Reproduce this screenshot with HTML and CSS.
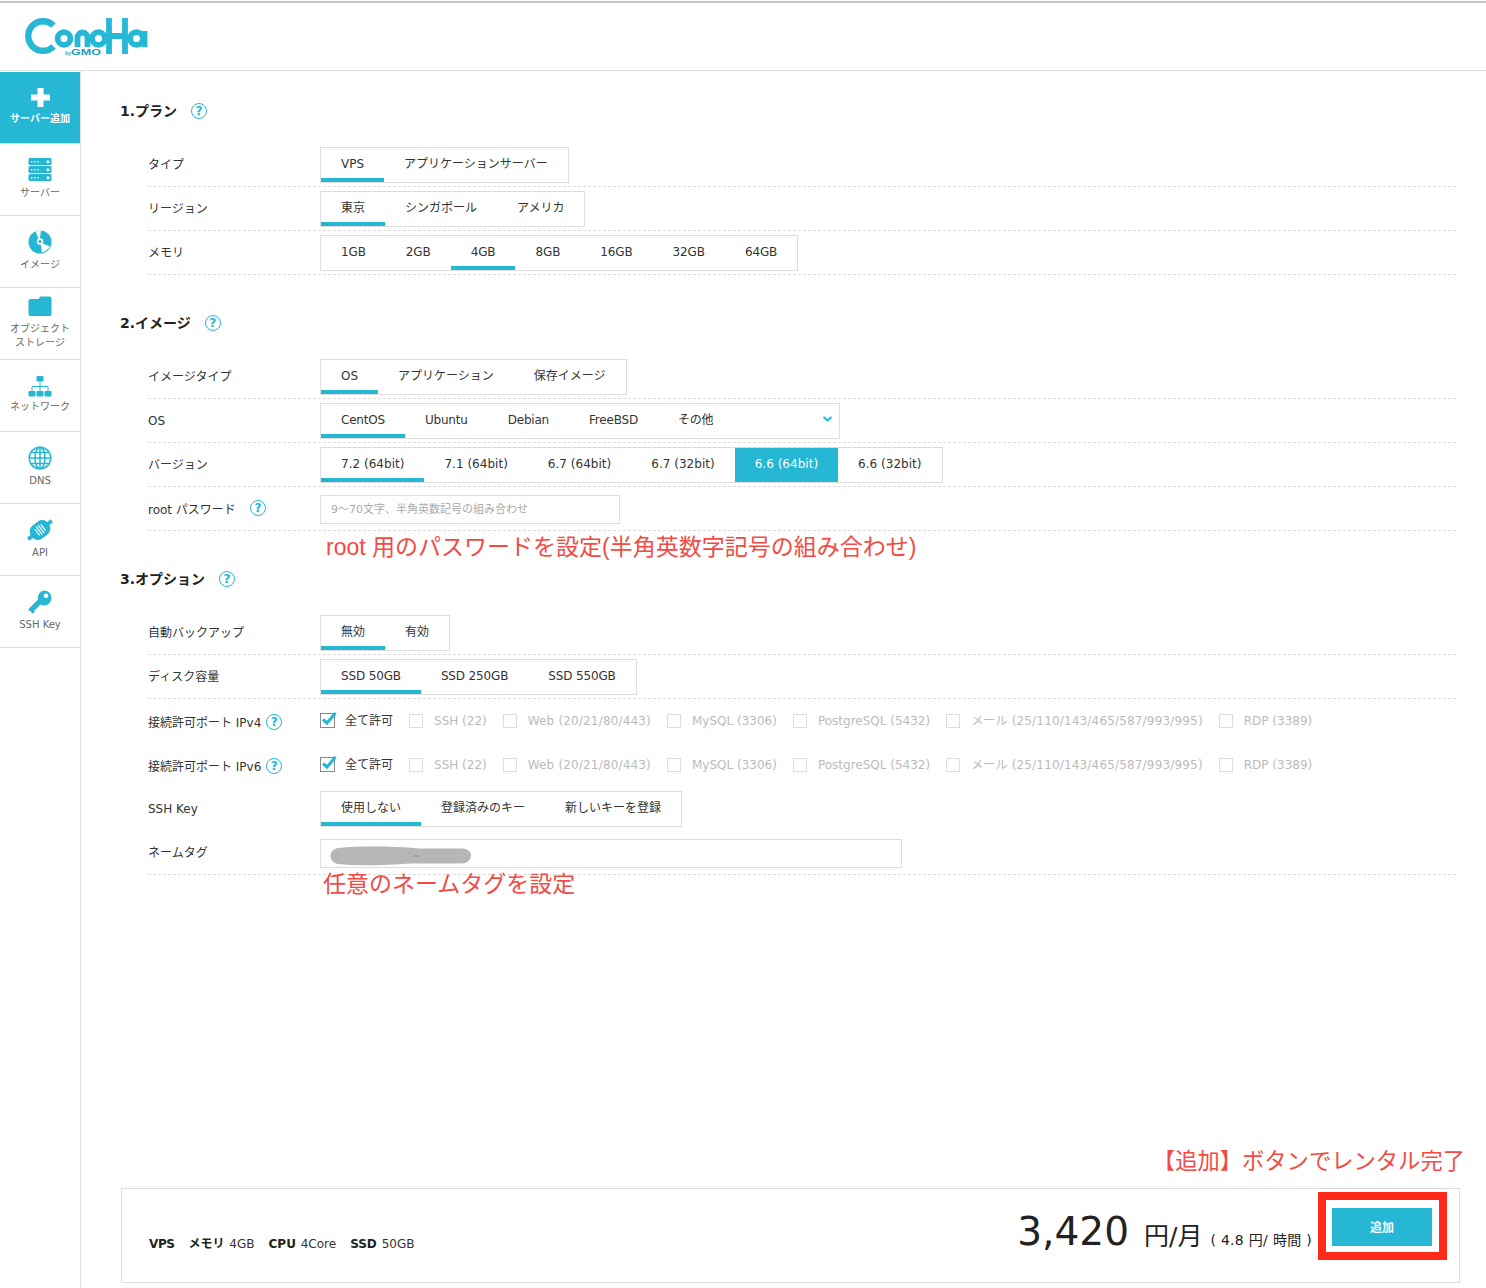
FILE: index.html
```html
<!DOCTYPE html>
<html lang="ja">
<head>
<meta charset="utf-8">
<title>ConoHa サーバー追加</title>
<link rel="stylesheet" href="styles.css">
</head>
<body>
<header class="header">
  <svg class="logo" width="126" height="40" viewBox="0 0 126 40" aria-label="ConoHa by GMO">
    <g fill="none" stroke="#25b7d4" stroke-width="5.8">
      <path d="M29.500 9.500A14.800 14.800 0 1 0 29.500 30.500" stroke-width="6.400"/>
      <circle cx="40" cy="22.500" r="6.400"/>
      <path d="M53.500 31V21.500a5 5 0 0 1 10 0V31"/>
      <circle cx="74.500" cy="22.500" r="6.400"/>
      <path d="M85 2V38M101 2V38M85 20H101"/>
      <circle cx="112.500" cy="22.500" r="6.400"/>
      <path d="M120.500 15V31"/>
    </g>
    <text class="logo-by" x="41" y="38.500">by</text>
    <text class="logo-gmo" x="47" y="39" textLength="30" lengthAdjust="spacingAndGlyphs">GMO</text>
  </svg>
</header>
<div class="layout">
  <nav class="sidebar">
    <a class="nav-item nav-item--active nav-item--tight">
      <svg class="nav-icon" width="24" height="24" viewBox="0 0 24 24"><path fill="#fff" d="M9.500 2h6v6.500H22v6h-6.500v6.500h-6v-6.500H3v-6h6.500z"/></svg>
      <span class="nav-label">サーバー追加</span>
    </a>
    <a class="nav-item">
      <svg class="nav-icon" width="24" height="24" viewBox="0 0 24 24">
        <g fill="#25b7d4"><rect x="0.500" y="0" width="23" height="7" rx="1.500"/><rect x="0.500" y="8" width="23" height="7" rx="1.500"/><rect x="0.500" y="16" width="23" height="7" rx="1.500"/></g>
        <g fill="#fff"><path d="M3 3h1.500v1.500H3zM6 3h1.500v1.500H6zM9 3h1.500v1.500H9zM3 11h1.500v1.500H3zM6 11h1.500v1.500H6zM9 11h1.500v1.500H9zM3 19h1.500v1.500H3zM6 19h1.500v1.500H6zM9 19h1.500v1.500H9z"/><circle cx="20" cy="3.700" r="1.500"/><circle cx="20" cy="11.700" r="1.500"/><circle cx="20" cy="19.700" r="1.500"/></g>
      </svg>
      <span class="nav-label">サーバー</span>
    </a>
    <a class="nav-item">
      <svg class="nav-icon" width="24" height="24" viewBox="0 0 24 24">
        <circle cx="12" cy="12" r="11.500" fill="#25b7d4"/>
        <path fill="#fff" d="M11.500 11L7.500 1.500C9.500 .5 11.500 .3 13 .6zM12.500 12.500L21.800 16.500C20.500 19 18 21.300 14 22.500z"/>
        <circle cx="12" cy="11.500" r="3.200" fill="#fff"/><circle cx="12" cy="11.500" r="1.500" fill="#25b7d4"/>
      </svg>
      <span class="nav-label">イメージ</span>
    </a>
    <a class="nav-item nav-item--two">
      <svg class="nav-icon" width="24" height="24" viewBox="0 0 24 24"><path fill="#25b7d4" d="M2 5h8.500l2-2.500H21.500a2 2 0 0 1 2 2V20a2 2 0 0 1-2 2H2.500a2 2 0 0 1-2-2V7A2 2 0 0 1 2 5z"/></svg>
      <span class="nav-label">オブジェクト<br>ストレージ</span>
    </a>
    <a class="nav-item nav-item--tight">
      <svg class="nav-icon" width="24" height="24" viewBox="0 0 24 24">
        <g fill="#25b7d4"><rect x="8.500" y="2" width="7" height="5.500" rx="1"/><rect x="0.500" y="17" width="7" height="5.500" rx="1"/><rect x="8.500" y="17" width="7" height="5.500" rx="1"/><rect x="16.500" y="17" width="7" height="5.500" rx="1"/></g>
        <path fill="none" stroke="#25b7d4" stroke-width="1" d="M12 7.500V17M4 17V12.500H20V17"/>
      </svg>
      <span class="nav-label">ネットワーク</span>
    </a>
    <a class="nav-item">
      <svg class="nav-icon" width="24" height="24" viewBox="0 0 24 24">
        <g fill="none" stroke="#25b7d4" stroke-width="1.500"><circle cx="12" cy="12" r="10.800"/><ellipse cx="12" cy="12" rx="5" ry="10.800"/><path d="M12 1.200V22.800M1.200 12H22.800M2.800 6.500H21.200M2.800 17.500H21.200"/></g>
      </svg>
      <span class="nav-label">DNS</span>
    </a>
    <a class="nav-item">
      <svg class="nav-icon" width="24" height="24" viewBox="0 0 24 24">
        <g transform="rotate(-38 12 12)">
          <rect x="1.500" y="4" width="21" height="16" rx="7" fill="#25b7d4"/>
          <path stroke="#25b7d4" stroke-width="4" d="M-3 12H3M21 12H27"/>
          <path stroke="#fff" stroke-width="1.200" d="M8.500 8V16M11 7V17M13.500 7V17M16 8V16"/>
        </g>
      </svg>
      <span class="nav-label">API</span>
    </a>
    <a class="nav-item">
      <svg class="nav-icon" width="24" height="24" viewBox="0 0 24 24">
        <path fill="#25b7d4" fill-rule="evenodd" d="M16 0.500a7.500 7.500 0 1 1-3.500 14.100L6 21l.5 2H3.500L3 21H1l-.5-2L10 9.500A7.500 7.500 0 0 1 16 .5zm2 3a2.300 2.300 0 1 0 0 4.600 2.300 2.300 0 0 0 0-4.600z"/>
      </svg>
      <span class="nav-label">SSH Key</span>
    </a>
  </nav>
  <main class="main">
    <section class="section section--first">
      <h2 class="heading">1.プラン<span class="help help--far">?</span></h2>
      <div class="row">
        <div class="label">タイプ</div>
        <div class="seg"><span class="tab tab--on">VPS</span><span class="tab">アプリケーションサーバー</span></div>
      </div>
      <div class="row">
        <div class="label">リージョン</div>
        <div class="seg"><span class="tab tab--on">東京</span><span class="tab">シンガポール</span><span class="tab">アメリカ</span></div>
      </div>
      <div class="row">
        <div class="label">メモリ</div>
        <div class="seg seg--memory"><span class="tab">1GB</span><span class="tab">2GB</span><span class="tab tab--on">4GB</span><span class="tab">8GB</span><span class="tab">16GB</span><span class="tab">32GB</span><span class="tab">64GB</span></div>
      </div>
    </section>
    <section class="section">
      <h2 class="heading">2.イメージ<span class="help help--far">?</span></h2>
      <div class="row">
        <div class="label">イメージタイプ</div>
        <div class="seg"><span class="tab tab--on">OS</span><span class="tab">アプリケーション</span><span class="tab">保存イメージ</span></div>
      </div>
      <div class="row">
        <div class="label">OS</div>
        <div class="seg seg--os"><span class="tab tab--on">CentOS</span><span class="tab">Ubuntu</span><span class="tab">Debian</span><span class="tab">FreeBSD</span><span class="tab">その他</span>
          <svg class="chevron" width="11" height="6" viewBox="0 0 11 6"><path fill="none" stroke="#25b7d4" stroke-width="2" d="M1.500 1L5.500 4.500L9.500 1"/></svg>
        </div>
      </div>
      <div class="row">
        <div class="label">バージョン</div>
        <div class="seg seg--version"><span class="tab tab--on">7.2 (64bit)</span><span class="tab">7.1 (64bit)</span><span class="tab">6.7 (64bit)</span><span class="tab">6.7 (32bit)</span><span class="tab tab--filled">6.6 (64bit)</span><span class="tab">6.6 (32bit)</span></div>
      </div>
      <div class="row row--input">
        <div class="label label--input">root パスワード<span class="help help--far help--raised">?</span></div>
        <div class="field field--password">9〜70文字、半角英数記号の組み合わせ</div>
      </div>
      <p class="note note--root">root 用のパスワードを設定(半角英数字記号の組み合わせ)</p>
    </section>
    <section class="section section--after-note">
      <h2 class="heading">3.オプション<span class="help help--far">?</span></h2>
      <div class="row">
        <div class="label">自動バックアップ</div>
        <div class="seg"><span class="tab tab--on">無効</span><span class="tab">有効</span></div>
      </div>
      <div class="row">
        <div class="label">ディスク容量</div>
        <div class="seg seg--disk"><span class="tab tab--on">SSD 50GB</span><span class="tab">SSD 250GB</span><span class="tab">SSD 550GB</span></div>
      </div>
      <div class="row row--plain">
        <div class="label label--port">接続許可ポート IPv4<span class="help help--port">?</span></div>
        <div class="ports">
          <span class="port port--on"><svg class="check" width="17" height="17" viewBox="0 0 17 17"><rect x="0.500" y="2.500" width="14" height="14" fill="#fff" stroke="#888"/><path fill="none" stroke="#25b7d4" stroke-width="3" d="M3 8.500L7 12L15.500 2"/></svg>全て許可</span>
          <span class="port"><i class="box"></i>SSH (22)</span>
          <span class="port port--digits"><i class="box"></i>Web (20/21/80/443)</span>
          <span class="port"><i class="box"></i>MySQL (3306)</span>
          <span class="port"><i class="box"></i>PostgreSQL (5432)</span>
          <span class="port port--digits"><i class="box"></i>メール (25/110/143/465/587/993/995)</span>
          <span class="port"><i class="box"></i>RDP (3389)</span>
        </div>
      </div>
      <div class="row row--plain">
        <div class="label label--port">接続許可ポート IPv6<span class="help help--port">?</span></div>
        <div class="ports">
          <span class="port port--on"><svg class="check" width="17" height="17" viewBox="0 0 17 17"><rect x="0.500" y="2.500" width="14" height="14" fill="#fff" stroke="#888"/><path fill="none" stroke="#25b7d4" stroke-width="3" d="M3 8.500L7 12L15.500 2"/></svg>全て許可</span>
          <span class="port"><i class="box"></i>SSH (22)</span>
          <span class="port port--digits"><i class="box"></i>Web (20/21/80/443)</span>
          <span class="port"><i class="box"></i>MySQL (3306)</span>
          <span class="port"><i class="box"></i>PostgreSQL (5432)</span>
          <span class="port port--digits"><i class="box"></i>メール (25/110/143/465/587/993/995)</span>
          <span class="port"><i class="box"></i>RDP (3389)</span>
        </div>
      </div>
      <div class="row row--plain">
        <div class="label">SSH Key</div>
        <div class="seg"><span class="tab tab--on">使用しない</span><span class="tab">登録済みのキー</span><span class="tab">新しいキーを登録</span></div>
      </div>
      <div class="row row--input">
        <div class="label">ネームタグ</div>
        <div class="field field--tag"><svg class="blur" width="142" height="20" viewBox="0 0 142 20"><path fill="#b6b6b6" d="M8 2C30 0 60 0 90 2.500L132 2.500C145 3 143 17 132 17.500L80 17.500C55 19.500 25 20 8 18C-2 16-2 4 8 2z"/><path fill="none" stroke="#888" stroke-width="1" d="M84 10h5"/></svg></div>
      </div>
      <p class="note note--tag">任意のネームタグを設定</p>
    </section>
    <div class="bottom">
      <p class="note note--finish">【追加】ボタンでレンタル完了</p>
      <div class="summary">
        <div class="spec"><b class="spec-vps">VPS</b><span class="spec-item"><b>メモリ</b> 4GB</span><span class="spec-item"><b>CPU</b> 4Core</span><span class="spec-item"><b>SSD</b> 50GB</span></div>
        <div class="price"><span class="price-num">3,420</span><span class="price-unit">円/月</span><span class="price-hour">( 4.8 円/ 時間 )</span></div>
        <button class="add">追加</button>
        <div class="frame"></div>
      </div>
    </div>
  </main>
</div>
</body>
</html>
```
FILE: styles.css
```css
* { box-sizing: border-box; }
html, body { margin: 0; height: 1288px; }
body {
  padding-top: 1px;
  background: #fff;
  color: #333;
  font-family: "DejaVu Sans", "Noto Sans CJK JP", sans-serif;
  font-size: 12px;
  overflow: hidden;
}
.header {
  height: 70px;
  border-top: 2px solid #c4c4c4;
  border-bottom: 1px solid #ddd;
  padding: 13px 0 0 24px;
}
.logo { display: block; }
.logo-by { font: bold 5px "Liberation Sans", sans-serif; fill: #25a0c0; }
.logo-gmo { font: bold 8.500px "Liberation Sans", sans-serif; fill: #1f9cbc; }
.layout { display: flex; height: 1217px; }
.sidebar {
  width: 81px;
  flex: none;
  padding-top: 1px;
  border-right: 1px solid #ddd;
}
.nav-item {
  display: flex;
  flex-direction: column;
  align-items: center;
  height: 72px;
  padding-top: 14px;
  border-bottom: 1px solid #ddd;
  color: #666;
  font-size: 10px;
  line-height: 16px;
  text-align: center;
}
.nav-item--active { background: #25b7d4; color: #fff; font-weight: bold; }
.nav-icon { display: block; flex: none; overflow: visible; }
.nav-label { margin-top: 3px; }
.nav-item--tight .nav-label { margin-top: 1px; }
.nav-item--two { padding-top: 6px; line-height: 14px; }
.nav-item--two .nav-label { margin-top: 4px; }
.main {
  flex: 1;
  display: flex;
  flex-direction: column;
  padding: 0 30px 5px 39px;
  min-width: 0;
}
.section { padding-top: 32px; }
.section--first { padding-top: 24px; }
.section--after-note { padding-top: 0; }
.heading {
  display: flex;
  align-items: center;
  height: 32px;
  margin: 0 0 16px;
  padding-bottom: 2px;
  font-size: 14px;
  font-weight: bold;
  color: #222;
}
.heading .help { margin-top: 2px; }
.help {
  display: inline-flex;
  align-items: center;
  justify-content: center;
  width: 16px;
  height: 16px;
  border: 1.6px solid #25b7d4;
  border-radius: 50%;
  color: #25b7d4;
  font-size: 12px;
  font-weight: bold;
  line-height: 1;
}
.help--far { margin-left: 14px; }
.help--raised { margin-top: -2px; }
.help--port { margin: -1px 0 0 5px; }
.row {
  display: flex;
  height: 44px;
  margin-left: 28px;
  padding-top: 4px;
  border-bottom: 1px dashed #ddd;
}
.row--plain { border-bottom-color: transparent; }
.row--input { padding-top: 8px; }
.label {
  width: 172px;
  flex: none;
  padding-top: 10px;
  line-height: 16px;
  display: flex;
  align-items: flex-start;
}
.row--input .label { padding-top: 6px; }
.row--input .label--input { padding-top: 7px; }
.label--port { padding-top: 12px; }
.seg {
  display: flex;
  align-items: flex-start;
  height: 36px;
  border: 1px solid #ddd;
}
.seg--os { width: 520px; letter-spacing: -0.2px; }
.seg--memory { letter-spacing: -0.12px; }
.seg--disk { letter-spacing: -0.15px; }
.seg--version { letter-spacing: 0.02px; }
.tab {
  height: 34px;
  padding: 0 20px;
  line-height: 32px;
  color: #333;
  white-space: nowrap;
}
.tab--on { border-bottom: 4px solid #25b7d4; }
.tab--filled { background: #25b7d4; color: #fff; }
.chevron { margin: 12px 6px 0 auto; }
.field {
  height: 29px;
  border: 1px solid #ddd;
  font-size: 11px;
  line-height: 27px;
  color: #aaa;
  padding-left: 10px;
}
.field--password { width: 300px; }
.field--tag { width: 582px; padding: 6px 0 0 9px; }
.blur { display: block; }
.ports {
  display: flex;
  gap: 16px;
  padding-top: 11px;
  height: 26px;
  color: #bbb;
  white-space: nowrap;
}
.port { display: flex; align-items: center; line-height: 14px; height: 14px; }
.port--on { color: #333; }
.port--digits { letter-spacing: 0.17px; }
.check { flex: none; margin: -3px 8px 0 0; overflow: visible; }
.box {
  display: block;
  flex: none;
  width: 14px;
  height: 14px;
  margin-right: 11px;
  border: 1px solid #ddd;
}
.note {
  margin: 0;
  color: #f44a44;
  font-family: "Liberation Sans", "Noto Sans CJK JP", sans-serif;
  font-size: 23px;
  white-space: nowrap;
}
.note--root { height: 32px; line-height: 33px; margin-left: 206px; }
.note--tag { height: 18px; line-height: 18px; margin-left: 203px; }
.bottom { margin-top: auto; }
.note--finish { font-size: 22.300px; line-height: 34px; text-align: right; margin: 0 -9px 9px 0; }
.summary {
  position: relative;
  display: flex;
  align-items: flex-start;
  height: 95px;
  margin: 0 -4px 0 1px;
  padding: 19px 27px 0 27px;
  border: 1px solid #ddd;
}
.spec { display: flex; padding-top: 28px; line-height: 16px; color: #333; }
.spec b { color: #222; margin-right: 1px; }
.spec .spec-vps { letter-spacing: -0.4px; margin-right: 0; }
.spec-item { margin-left: 14px; }
.price {
  margin: 2px 0 0 auto;
  display: flex;
  align-items: baseline;
  color: #222;
  line-height: 44px;
}
.price-num { font-size: 39px; }
.price-unit { font-size: 25px; margin-left: 15px; }
.price-hour { font-size: 14px; margin-left: 8px; letter-spacing: 0.3px; }
.add {
  flex: none;
  width: 100px;
  height: 38px;
  margin-left: 20px;
  padding: 0 0 2px;
  border: 0;
  background: #25b7d4;
  color: #fff;
  font: bold 12px "DejaVu Sans", "Noto Sans CJK JP", sans-serif;
}
.frame {
  position: absolute;
  top: 3px;
  right: 12px;
  width: 129px;
  height: 68px;
  border: 8px solid #ff2a1a;
}
```
